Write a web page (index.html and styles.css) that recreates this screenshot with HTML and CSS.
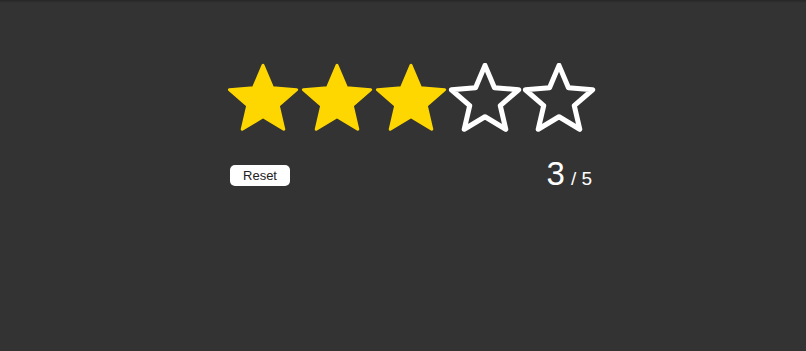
FILE: index.html
```html
<!DOCTYPE html>
<html>
<head>
    <meta charset="UTF-8">
    <title>Star Rating</title>
    <link rel="stylesheet" href="styles.css">
</head>
<body>
    <div class="rating">
        <div class="stars">
            <svg class="star on" viewBox="1 1.3 22 20.8"><path d="M12 17.27L18.18 21l-1.64-7.03L22 9.24l-7.19-.61L12 2 9.19 8.63 2 9.24l5.46 4.73L5.82 21z"/></svg>
            <svg class="star on" viewBox="1 1.3 22 20.8"><path d="M12 17.27L18.18 21l-1.64-7.03L22 9.24l-7.19-.61L12 2 9.19 8.63 2 9.24l5.46 4.73L5.82 21z"/></svg>
            <svg class="star on" viewBox="1 1.3 22 20.8"><path d="M12 17.27L18.18 21l-1.64-7.03L22 9.24l-7.19-.61L12 2 9.19 8.63 2 9.24l5.46 4.73L5.82 21z"/></svg>
            <svg class="star off" viewBox="1 1.3 22 20.8"><path d="M12 17.27L18.18 21l-1.64-7.03L22 9.24l-7.19-.61L12 2 9.19 8.63 2 9.24l5.46 4.73L5.82 21z"/></svg>
            <svg class="star off" viewBox="1 1.3 22 20.8"><path d="M12 17.27L18.18 21l-1.64-7.03L22 9.24l-7.19-.61L12 2 9.19 8.63 2 9.24l5.46 4.73L5.82 21z"/></svg>
        </div>
        <div class="bottom">
            <button class="reset">Reset</button>
            <div class="score">3<span class="total">/ 5</span></div>
        </div>
    </div>
</body>
</html>
```

FILE: styles.css
```css
html, body {
    margin: 0;
    height: 100%;
}

body {
    background: linear-gradient(#262626, #333333 3px) #333333;
    font-family: "Liberation Sans", Arial, sans-serif;
    color: white;
}

.rating {
    width: 370px;
    margin-left: 226px;
    padding-top: 63px;
}

.stars {
    display: flex;
}

.star {
    width: 74px;
    height: 70px;
    display: block;
}
.star path { stroke-linejoin: round; }
.star.on path {
    fill: #ffd700;
    stroke: #ffd700;
    stroke-width: 0.9;
}
.star.off path {
    fill: none;
    stroke: white;
    stroke-width: 1.5;
}

.bottom {
    display: flex;
    justify-content: space-between;
    align-items: flex-start;
    margin-top: 24px;
}

button.reset {
    margin: 8px 0 0 4px;
    width: 60px;
    height: 21px;
    padding: 0;
    border: none;
    border-radius: 5px;
    background: white;
    color: #222;
    font-family: "Liberation Sans", Arial, sans-serif;
    font-size: 13px;
    outline: none;
}

.score {
    font-size: 33px;
    line-height: 33px;
    margin-right: 4px;
}
.score .total {
    font-size: 19px;
    margin-left: 6px;
}
```
